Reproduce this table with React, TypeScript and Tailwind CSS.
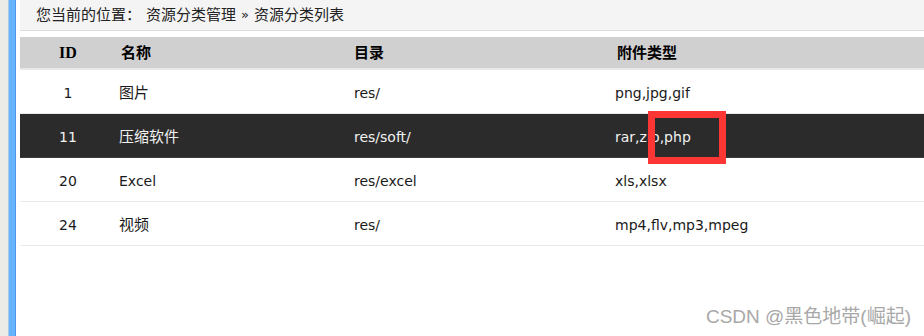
import React from 'react';

const rows = [
  { id: 1, name: '图片', dir: 'res/', types: 'png,jpg,gif' },
  { id: 11, name: '压缩软件', dir: 'res/soft/', types: 'rar,zip,php' },
  { id: 20, name: 'Excel', dir: 'res/excel', types: 'xls,xlsx' },
  { id: 24, name: '视频', dir: 'res/', types: 'mp4,flv,mp3,mpeg' },
];

const isCjk = (s: string) => /[\u4e00-\u9fff]/.test(s);

const App: React.FC = () => {
  return (
    <div className="relative flex h-[336px] w-[924px] overflow-hidden bg-white font-['DejaVu_Sans','Noto_Sans_CJK_SC',sans-serif] text-[14px] text-[#1a1a1a]">
      {/* left frame strip */}
      <div className="flex h-full shrink-0">
        <div className="w-[8px] bg-[#ecebe8]" />
        <div className="w-[8px] border-l border-r border-l-[#a9c9ea] border-r-[#4f97e6] bg-[#66b3ff]" />
        <div className="w-[4px] bg-white" />
      </div>

      <div className="flex min-w-0 flex-1 flex-col">
        {/* breadcrumb */}
        <div className="flex h-[31px] items-center border-b border-[#dedede] bg-[#f4f4f4] pl-[16px] text-[15px] text-[#222]">
          <span>您当前的位置：</span>
          <span className="ml-[5px]">资源分类管理</span>
          <span className="mx-[5px] font-['DejaVu_Sans'] text-[13px]">»</span>
          <span>资源分类列表</span>
        </div>

        <div className="h-[6px]" />

        {/* table header */}
        <div className="grid h-[33px] grid-cols-[96px_235px_261px_1fr] items-center border-b-2 border-[#e8e8e8] bg-[#d0d0d0] pt-[1px] text-[15px] font-bold text-black">
          <div className="text-center font-['Liberation_Serif'] text-[16px]">ID</div>
          <div className="pl-[5px]">名称</div>
          <div className="pl-[3px]">目录</div>
          <div className="pl-[5px]">附件类型</div>
        </div>

        {/* rows */}
        {rows.map((r, i) => (
          <div
            key={r.id}
            className={
              i === 1
                ? 'grid h-[44px] grid-cols-[96px_235px_261px_1fr] items-center border-b border-[#3a3a3a] bg-[#2b2b2b] pt-[3px] text-[#f2f2f2]'
                : 'grid h-[44px] grid-cols-[96px_235px_261px_1fr] items-center border-b border-[#eaeaea] bg-white pt-[3px]'
            }
          >
            <div className="text-center">{r.id}</div>
            <div className={isCjk(r.name) ? 'pl-[3px] text-[15px]' : 'pl-[3px]'}>{r.name}</div>
            <div className="pl-[3px]">{r.dir}</div>
            <div className="pl-[3px]">{r.types}</div>
          </div>
        ))}
      </div>

      {/* annotation box */}
      <div className="absolute left-[648px] top-[111px] h-[53px] w-[78px] border-[7px] border-[#fc3535]" />

      {/* watermark */}
      <div className="absolute bottom-[5px] right-[13px] font-['Liberation_Sans','Noto_Sans_CJK_SC',sans-serif] text-[19px] text-[#a8a8a8]">
        CSDN @黑色地带(崛起)
      </div>
    </div>
  );
};

export default App;
